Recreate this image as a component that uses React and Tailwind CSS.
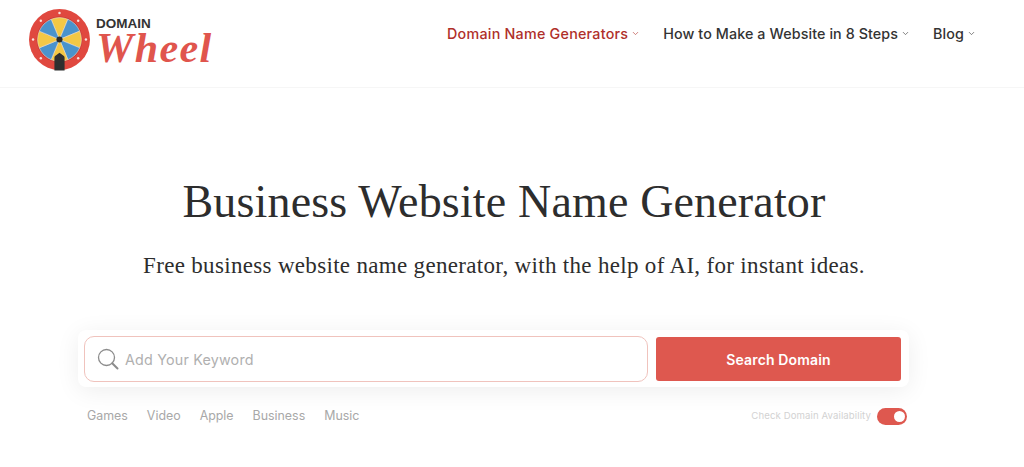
import React from "react";
import { ChevronDown } from "lucide-react";

const lex = { fontFamily: '"Inter","Liberation Sans",sans-serif' };

function Logo() {
  const seg = [];
  for (let i = 0; i < 8; i++) {
    const a0 = ((i * 45 - 22.5 - 90) * Math.PI) / 180;
    const a1 = ((i * 45 + 22.5 - 90) * Math.PI) / 180;
    const r = 21.5;
    seg.push(
      <path
        key={i}
        d={`M30 30 L${30 + r * Math.cos(a0)} ${30 + r * Math.sin(a0)} A${r} ${r} 0 0 1 ${30 + r * Math.cos(a1)} ${30 + r * Math.sin(a1)} Z`}
        fill={i % 2 ? "#4a93cc" : "#f3c845"}
        stroke="#f6efe0"
        strokeWidth="0.5"
      />
    );
  }
  const dots = [];
  for (let i = 0; i < 8; i++) {
    const a = ((i * 45 - 90) * Math.PI) / 180;
    if (i !== 4) dots.push(<circle key={i} cx={30 + 26 * Math.cos(a)} cy={30 + 26 * Math.sin(a)} r="1.2" fill="#f9e3df" />);
  }
  return (
    <svg width="61" height="62" viewBox="0 0 60 61" className="shrink-0">
      <circle cx="30" cy="30" r="30" fill="#e0483f" />
      <circle cx="30" cy="30" r="22.5" fill="#c4352e" />
      {seg}
      {dots}
      <circle cx="30" cy="30" r="3" fill="#2b2b2b" />
      <path d="M25 60.5 V48 Q25 46.5 26 46 L30 43 L34 46 Q35 46.5 35 48 V60.5 Z" fill="#2f2f2f" />
    </svg>
  );
}

function NavItem({ label, active }) {
  return (
    <div className={`flex items-center gap-[3px] ${active ? "text-[#b0302a] tracking-[0.24px]" : "text-[#333333] tracking-[0.1px]"}`}>
      <span className="text-[14.3px] font-medium">{label}</span>
      <ChevronDown size={9} strokeWidth={2} className="opacity-80 mb-[2px]" />
    </div>
  );
}

export default function App() {
  return (
    <div className="w-[1024px] h-[467px] overflow-hidden bg-white" style={lex}>
      <header className="h-[88px] border-b border-[#f6f6f6] flex items-start justify-between pl-[29px] pr-[48px]">
        <div className="flex items-start mt-[9px] h-[62px]">
          <Logo />
          <div className="ml-[6px] flex flex-col pt-[8px]">
            <span className="text-[13.5px] leading-[13px] font-bold text-[#333]" style={{ fontFamily: '"Liberation Sans",sans-serif' }}>
              DOMAIN
            </span>
            <span className="text-[42px] leading-[36px] font-bold italic text-[#e0554d] tracking-[1.4px]" style={{ fontFamily: '"Liberation Serif",serif' }}>
              Wheel
            </span>
          </div>
        </div>
        <nav className="flex items-center gap-[23px] h-[68px]">
          <NavItem label="Domain Name Generators" active />
          <NavItem label="How to Make a Website in 8 Steps" />
          <NavItem label="Blog" />
        </nav>
      </header>

      <main className="flex flex-col pt-[84px]">
        <div className="pr-[16px] flex flex-col items-center text-[#2d2d2d]" style={{ fontFamily: '"Liberation Serif",serif' }}>
          <h1 className="text-[46px] leading-[60px] font-normal tracking-[0.16px]">Business Website Name Generator</h1>
          <p className="mt-[19px] text-[23px] leading-[30px] tracking-[0.32px]">
            Free business website name generator, with the help of AI, for instant ideas.
          </p>
        </div>

        <div className="ml-[78px] mt-[49px] w-[831px] h-[57px] rounded-lg bg-white shadow-[0_4px_24px_rgba(0,0,0,0.07)] flex items-center pl-[6px] pr-[8px] gap-[8px]">
          <div className="w-[564px] h-[46px] rounded-[10px] border-[1.5px] border-[#f0c3bd] flex items-center pl-[12px] gap-[6px]">
            <svg width="22" height="22" viewBox="0 0 22 22" fill="none" className="shrink-0">
              <circle cx="9.5" cy="9.5" r="8" stroke="#8c8c8c" strokeWidth="1.3" />
              <path d="M15.2 15.2 L20.5 20.5" stroke="#8c8c8c" strokeWidth="2" strokeLinecap="round" />
            </svg>
            <span className="text-[14.3px] tracking-[0.2px] text-[#b0b0b0] pt-[2px]">Add Your Keyword</span>
          </div>
          <button className="w-[245px] h-[44px] rounded-[3px] bg-[#de584f] text-white text-[14px] font-semibold tracking-[0.15px] pt-[2px]">
            Search Domain
          </button>
        </div>

        <div className="ml-[87px] mt-[20px] w-[820px] h-[18px] flex items-center justify-between">
          <div className="flex items-center gap-[19px] text-[12.4px] text-[#a8a8a8]">
            <span>Games</span>
            <span>Video</span>
            <span>Apple</span>
            <span>Business</span>
            <span>Music</span>
          </div>
          <div className="flex items-center gap-[6px]">
            <span className="text-[9.6px] text-[#d2d2d2] tracking-[0.1px]">Check Domain Availability</span>
            <div className="w-[30px] h-[17px] rounded-full bg-[#de584f] flex items-center justify-end pr-[2px]">
              <div className="w-[11px] h-[11px] rounded-full bg-white" />
            </div>
          </div>
        </div>
      </main>
    </div>
  );
}
